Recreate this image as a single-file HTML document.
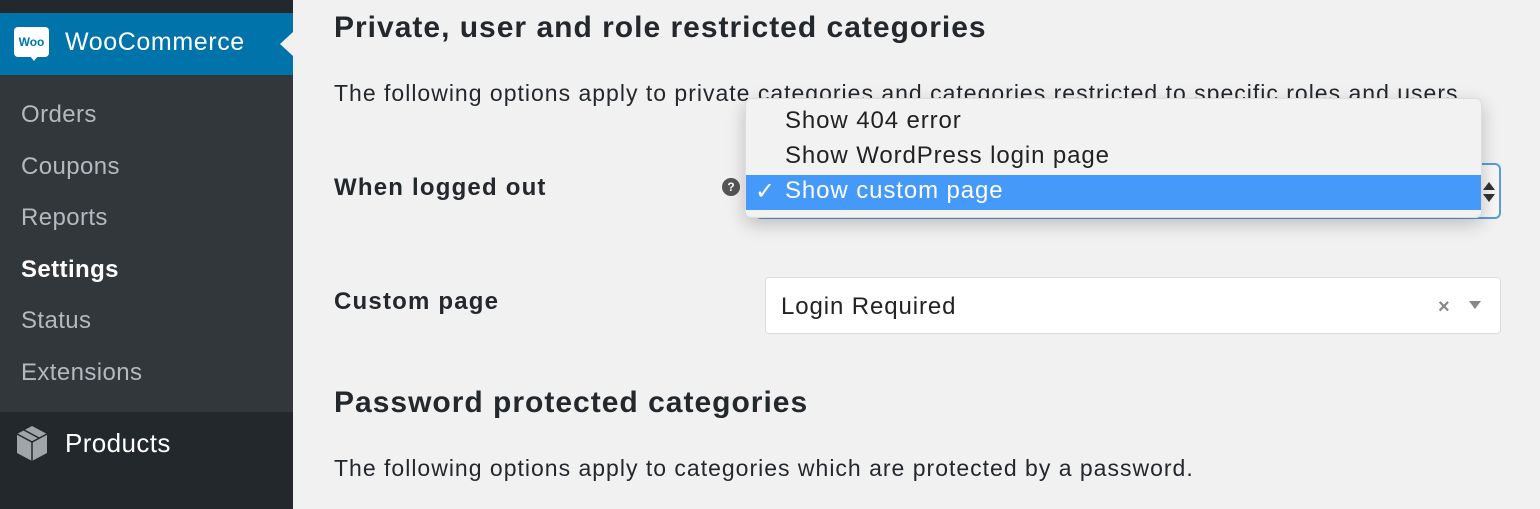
<!DOCTYPE html>
<html><head><style>
*{margin:0;padding:0;box-sizing:border-box}
body{width:1540px;height:509px;background:#f1f1f1;font-family:"Liberation Sans",sans-serif;position:relative;overflow:hidden;color:#23282d}
.sb{position:absolute;left:0;top:0;width:293px;height:509px;background:#23282d}
.top{position:absolute;left:0;top:0;width:293px;height:13px;background:#23282d}
.woo{position:absolute;left:0;top:13px;width:293px;height:62px;background:#0073aa}
.sub{position:absolute;left:0;top:75px;width:293px;height:337px;background:#32373c}
.si{position:absolute;left:21px;font-size:24px;letter-spacing:0.4px;color:#b4b9be}
.abs{position:absolute;white-space:nowrap}
h2{position:absolute;font-size:30px;letter-spacing:1px;font-weight:bold;white-space:nowrap}
.p{position:absolute;font-size:23px;letter-spacing:1px;white-space:nowrap}
.lab{position:absolute;font-size:24px;letter-spacing:1.2px;font-weight:bold;white-space:nowrap}
.opt{position:absolute;font-size:24px;letter-spacing:0.9px;white-space:nowrap;color:#222}
</style></head><body>
<div class="sb"></div><div class="top"></div>
<div class="woo">
<div style="position:absolute;left:14px;top:14px;width:35px;height:30px;background:#fff;border-radius:4px;color:#0073aa;font-size:12px;font-weight:bold;text-align:center;line-height:30px">Woo</div>
<div style="position:absolute;left:30px;top:43px;width:0;height:0;border-left:4px solid transparent;border-right:4px solid transparent;border-top:5px solid #fff"></div>
<div class="abs" style="left:65px;top:15px;font-size:25px;letter-spacing:0.6px;color:#fff">WooCommerce</div>
<div style="position:absolute;right:0;top:19px;width:0;height:0;border-top:12px solid transparent;border-bottom:12px solid transparent;border-right:13px solid #f1f1f1"></div>
</div>
<div class="sub"></div>
<div class="si" style="top:101px">Orders</div>
<div class="si" style="top:153px">Coupons</div>
<div class="si" style="top:204px">Reports</div>
<div class="si" style="top:256px;color:#fff;font-weight:bold">Settings</div>
<div class="si" style="top:307px">Status</div>
<div class="si" style="top:359px">Extensions</div>
<svg style="position:absolute;left:15px;top:425px" width="34" height="38" viewBox="0 0 34 38"><polygon points="17,1 32,9 32,28 17,36 2,28 2,9" fill="#a0a5aa"/><polyline points="2,9 17,17 32,9" fill="none" stroke="#23282d" stroke-width="1.5"/><line x1="17" y1="17" x2="17" y2="36" stroke="#23282d" stroke-width="1.5"/><line x1="9" y1="5" x2="24" y2="13" stroke="#23282d" stroke-width="1.5"/></svg>
<div class="abs" style="left:65px;top:428px;font-size:26px;letter-spacing:0.4px;color:#fff">Products</div>

<h2 style="left:334px;top:11px">Private, user and role restricted categories</h2>
<div class="p" style="left:334px;top:80px">The following options apply to private categories and categories restricted to specific roles and users.</div>
<div class="lab" style="left:334px;top:174px">When logged out</div>
<div style="position:absolute;left:722px;top:178px;width:18px;height:18px;border-radius:50%;background:#555;color:#fff;font-size:12px;font-weight:bold;text-align:center;line-height:18px">?</div>
<div style="position:absolute;left:755px;top:163px;width:746px;height:56px;border:2px solid #5b9dd9;border-radius:6px;background:#f7f7f7"></div>
<svg style="position:absolute;left:1482px;top:180px" width="14" height="24"><polygon points="7,2 13,10 1,10" fill="#333"/><polygon points="7,22 13,14 1,14" fill="#333"/></svg>
<div style="position:absolute;left:745px;top:98px;width:737px;height:120px;background:#f2f2f2;border-radius:6px;border:1px solid #ddd;box-shadow:0 6px 18px rgba(0,0,0,0.22)"></div>
<div class="opt" style="left:785px;top:107px">Show 404 error</div>
<div class="opt" style="left:785px;top:142px">Show WordPress login page</div>
<div style="position:absolute;left:746px;top:175px;width:735px;height:35px;background:#4599f8"></div>
<div class="opt" style="left:755px;top:177px;color:#fff">✓</div>
<div class="opt" style="left:785px;top:177px;color:#fff">Show custom page</div>

<div class="lab" style="left:334px;top:288px">Custom page</div>
<div style="position:absolute;left:765px;top:277px;width:736px;height:57px;background:#fff;border:1px solid #ddd;border-radius:4px"></div>
<div class="opt" style="left:781px;top:293px">Login Required</div>
<div class="abs" style="left:1438px;top:296px;font-size:20px;color:#888;font-weight:bold">×</div>
<svg style="position:absolute;left:1468px;top:300px" width="14" height="10"><polygon points="1,1 13,1 7,9" fill="#888"/></svg>

<h2 style="left:334px;top:386px">Password protected categories</h2>
<div class="p" style="left:334px;top:455px">The following options apply to categories which are protected by a password.</div>
</body></html>
